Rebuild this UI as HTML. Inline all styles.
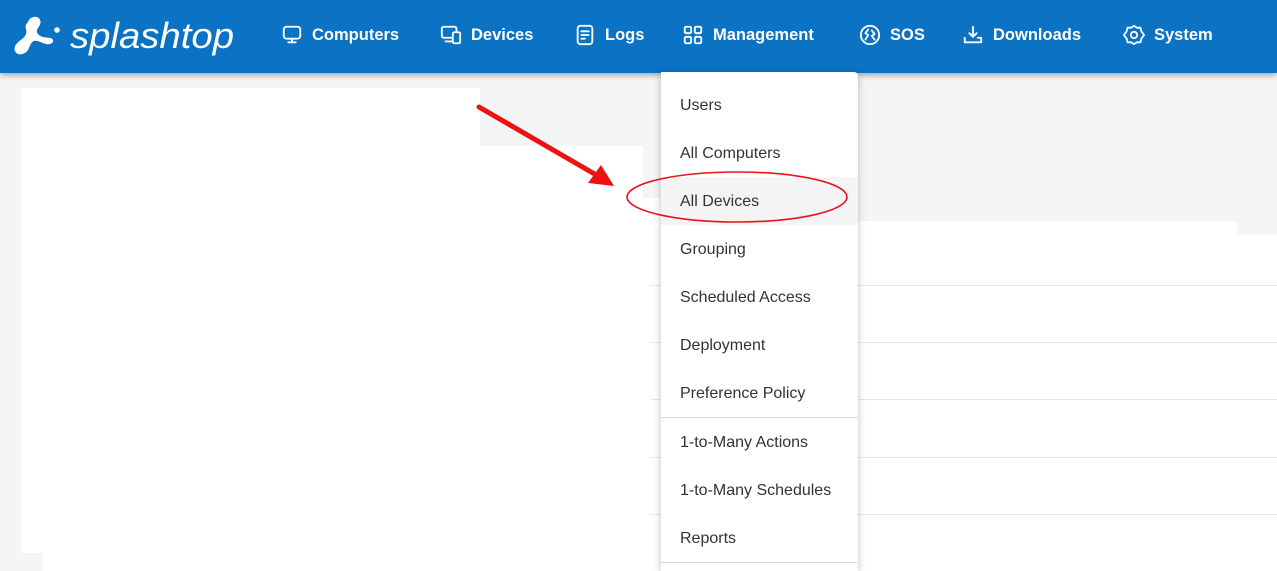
<!DOCTYPE html>
<html><head><style>
*{margin:0;padding:0;box-sizing:border-box}
body{width:1277px;height:571px;overflow:hidden;background:#f4f5f7;font-family:"Liberation Sans",sans-serif;position:relative}
.hdr{position:absolute;left:0;top:0;width:1277px;height:73px;background:#0b72c4;box-shadow:0 2px 6px rgba(0,0,0,.35);z-index:2}
.nav{position:absolute;top:24px;color:#fff;font-size:16.5px;font-weight:bold;display:flex;align-items:center;gap:9px;height:22px}
.nav svg{width:22px;height:22px;fill:none;stroke:#fff;stroke-width:2;stroke-linecap:round;stroke-linejoin:round}
.w{position:absolute;background:#fff}
.line{position:absolute;left:650px;width:627px;height:1px;background:#e4e6e9}
.menu{position:absolute;left:661px;top:72px;width:197px;height:499px;background:#fff;border-radius:0 4px 0 0;box-shadow:0 2px 8px rgba(0,0,0,.25);z-index:3}
.it{height:48px;line-height:50px;padding-left:19px;font-size:16px;color:#333}
.sep{border-top:1px solid #ddd}
</style></head><body>
<div class="hdr">
<svg style="position:absolute;left:0;top:0" width="250" height="73" viewBox="0 0 250 73">
<path d="M28 22c2-6 10-7 12-2 2 4-2 7-3 10-1 3 2 6 6 7 4 1 9 0 10 3 1 3-3 5-7 4-5-1-8-4-12-3-3 1-4 5-6 9-3 5-11 6-13 1-2-5 3-9 7-12 4-3 5-6 4-10-1-3 0-5 2-7z" fill="#fff"/>
<circle cx="57" cy="30" r="2.8" fill="#fff"/>
<text x="70" y="48" fill="#fff" font-family="Liberation Sans" font-style="italic" font-size="36" textLength="164" lengthAdjust="spacingAndGlyphs">splashtop</text>
</svg>
<div class="nav" style="left:281px"><svg viewBox="0 0 24 24"><rect x="3" y="3" width="18" height="13" rx="3"/><path d="M12 16v4M8 20h8"/></svg>Computers</div>
<div class="nav" style="left:440px"><svg viewBox="0 0 24 24"><rect x="2" y="3" width="16" height="12" rx="2"/><path d="M6 19h7"/><rect x="14" y="9" width="8" height="12" rx="1.5" fill="#0b72c4"/></svg>Devices</div>
<div class="nav" style="left:574px"><svg viewBox="0 0 24 24"><rect x="4" y="2" width="16" height="20" rx="3"/><path d="M8 8h8M8 12h8M8 16h4"/></svg>Logs</div>
<div class="nav" style="left:682px"><svg viewBox="0 0 24 24"><rect x="3" y="3" width="7" height="7" rx="1.5"/><rect x="14" y="3" width="7" height="7" rx="1.5"/><rect x="3" y="14" width="7" height="7" rx="1.5"/><rect x="14" y="14" width="7" height="7" rx="1.5"/></svg>Management</div>
<div class="nav" style="left:859px"><svg viewBox="0 0 24 24"><circle cx="12" cy="12" r="10"/><path d="M10 6l-3 4 3 2-3 5M14 7l3 4-3 2 3 4"/></svg>SOS</div>
<div class="nav" style="left:962px"><svg viewBox="0 0 24 24"><path d="M12 3v11M8 10l4 4 4-4M3 15v5h18v-5h-4"/></svg>Downloads</div>
<div class="nav" style="left:1123px"><svg viewBox="0 0 24 24"><path d="M12 2l3 2 4 0 1 4 3 4-3 4-1 4-4 0-3 2-3-2-4 0-1-4-3-4 3-4 1-4 4 0z"/><circle cx="12" cy="12" r="3.5"/></svg>System</div>
</div>
<div class="w" style="left:21px;top:88px;width:459px;height:465px"></div>
<div class="w" style="left:21px;top:146px;width:622px;height:407px"></div>
<div class="w" style="left:43px;top:540px;width:620px;height:31px"></div>
<div class="w" style="left:640px;top:198px;width:30px;height:373px"></div>
<div class="w" style="left:650px;top:221px;width:587px;height:350px"></div>
<div class="w" style="left:650px;top:235px;width:627px;height:336px"></div>
<div class="line" style="top:285px"></div><div class="line" style="top:342px"></div><div class="line" style="top:399px"></div><div class="line" style="top:457px"></div><div class="line" style="top:514px"></div>
<div class="menu">
<div style="height:9px"></div>
<div class="it">Users</div>
<div class="it">All Computers</div>
<div class="it" style="background:#f4f4f4">All Devices</div>
<div class="it">Grouping</div>
<div class="it">Scheduled Access</div>
<div class="it">Deployment</div>
<div class="it">Preference Policy</div>
<div class="sep"></div>
<div class="it">1-to-Many Actions</div>
<div class="it">1-to-Many Schedules</div>
<div class="it">Reports</div>
<div class="sep"></div>
</div>
<svg style="position:absolute;left:0;top:0;z-index:4" width="1277" height="571">
<ellipse cx="737" cy="197" rx="110" ry="25" fill="none" stroke="#e8151b" stroke-width="1.6"/>
<line x1="479" y1="107" x2="598" y2="176" stroke="#ee1111" stroke-width="5" stroke-linecap="round"/>
<path d="M614 186 L588 183 L601 165 Z" fill="#ee1111"/>
</svg>
</body></html>
